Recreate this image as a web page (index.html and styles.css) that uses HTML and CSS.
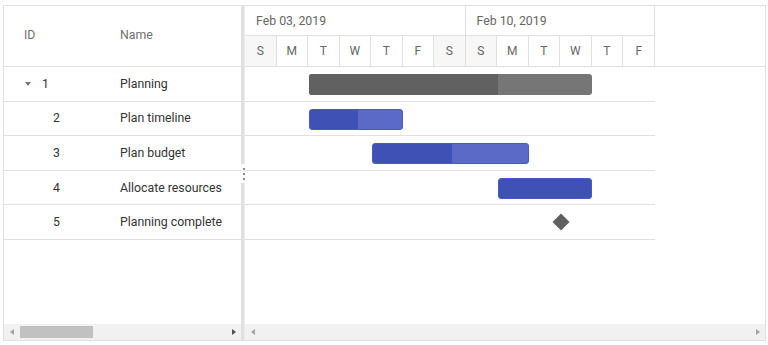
FILE: index.html
```html
<!DOCTYPE html>
<html>
<head>
<meta charset="utf-8">
<link rel="stylesheet" href="styles.css">
</head>
<body>
<div class="gantt">
  <div class="grid-pane">
    <div class="grid-header">
      <div class="hcell col-id">ID</div>
      <div class="hcell col-name">Name</div>
    </div>
    <div class="grid-body">
      <div class="row">
        <div class="cell col-id parent"><span class="expander"></span>1</div>
        <div class="cell col-name">Planning</div>
      </div>
      <div class="row">
        <div class="cell col-id child">2</div>
        <div class="cell col-name">Plan timeline</div>
      </div>
      <div class="row">
        <div class="cell col-id child">3</div>
        <div class="cell col-name">Plan budget</div>
      </div>
      <div class="row">
        <div class="cell col-id child">4</div>
        <div class="cell col-name">Allocate resources</div>
      </div>
      <div class="row">
        <div class="cell col-id child">5</div>
        <div class="cell col-name">Planning complete</div>
      </div>
    </div>
    <div class="hscroll">
      <span class="arrow left"></span>
      <div class="track"><div class="thumb"></div></div>
      <span class="arrow right dark"></span>
    </div>
  </div>
  <div class="splitter"><div class="handle"><i></i><i></i><i></i></div></div>
  <div class="chart-pane">
    <div class="chart-header">
      <div class="timeline-head">
        <div class="months">
          <div class="month">Feb 03, 2019</div>
          <div class="month">Feb 10, 2019</div>
        </div>
        <div class="days">
          <div class="day weekend">S</div>
          <div class="day">M</div>
          <div class="day">T</div>
          <div class="day">W</div>
          <div class="day">T</div>
          <div class="day">F</div>
          <div class="day weekend">S</div>
          <div class="day weekend">S</div>
          <div class="day">M</div>
          <div class="day">T</div>
          <div class="day">W</div>
          <div class="day">T</div>
          <div class="day">F</div>
        </div>
      </div>
    </div>
    <div class="chart-body">
      <div class="chart-rows">
        <div class="crow">
          <div class="bar summary" style="left:63.5px;width:283px"><div class="progress" style="width:189px"></div></div>
        </div>
        <div class="crow">
          <div class="bar task" style="left:63.5px;width:94.5px"><div class="progress" style="width:49px"></div></div>
        </div>
        <div class="crow">
          <div class="bar task" style="left:126.5px;width:157.5px"><div class="progress" style="width:80px"></div></div>
        </div>
        <div class="crow">
          <div class="bar task full" style="left:252.5px;width:94.5px"></div>
        </div>
        <div class="crow">
          <div class="milestone" style="left:309.5px"></div>
        </div>
      </div>
    </div>
    <div class="hscroll">
      <span class="arrow left"></span>
      <div class="track"></div>
      <span class="arrow right"></span>
    </div>
  </div>
</div>
</body>
</html>
```

FILE: styles.css
```css
* { box-sizing: border-box; }
html, body { margin: 0; padding: 0; background: #fff; }
body { font-family: Roboto, "Noto Sans", Arial, sans-serif; }

.gantt {
  margin: 5px 0 0 3px;
  width: 763px;
  height: 336px;
  border: 1px solid #e0e0e0;
  display: flex;
  background: #fff;
}

.grid-pane {
  width: 237px;
  display: flex;
  flex-direction: column;
}

.grid-header {
  height: 61px;
  border-bottom: 1px solid #e0e0e0;
  display: flex;
  align-items: center;
  padding-bottom: 3px;
  font-size: 12.3px;
  color: #6f6f6f;
}

.col-id { width: 104px; }
.col-name { flex: 1; padding-left: 12px; white-space: nowrap; }
.hcell.col-id { padding-left: 20px; }

.grid-body { flex: 1; }

.row {
  height: 34.6px;
  border-bottom: 1px solid #e0e0e0;
  display: flex;
  align-items: center;
  font-size: 12.3px;
  color: #333;
}

.cell.parent { padding-left: 21px; display: flex; align-items: center; }
.cell.child { padding-left: 49px; }

.expander {
  width: 0;
  height: 0;
  border-left: 3.5px solid transparent;
  border-right: 3.5px solid transparent;
  border-top: 4px solid #757575;
  margin: 1px 11px 0 0;
}

.hscroll {
  height: 16px;
  background: #f1f1f1;
  display: flex;
  align-items: center;
  flex-shrink: 0;
}
.hscroll .track { flex: 1; height: 12px; }
.thumb {
  margin-left: 1px;
  width: 73px;
  height: 12px;
  background: #c1c1c1;
}
.arrow {
  width: 0;
  height: 0;
  border-top: 3.5px solid transparent;
  border-bottom: 3.5px solid transparent;
  flex-shrink: 0;
}
.arrow.left { border-right: 4px solid #a3a3a3; margin: 0 5px 0 6px; }
.arrow.right { border-left: 4px solid #a3a3a3; margin: 0 5px 0 6px; }
.arrow.right.dark { border-left-color: #505050; }

.splitter {
  width: 4px;
  background: #e0e0e0;
  border-right: 1px solid #ececec;
  position: relative;
}
.splitter .handle {
  position: absolute;
  left: 0;
  top: 158px;
  width: 4px;
  height: 19px;
  background: #fff;
  display: flex;
  flex-direction: column;
  align-items: flex-end;
  justify-content: center;
  gap: 3px;
}
.splitter .handle i {
  display: block;
  width: 2px;
  height: 2px;
  border-radius: 1px;
  background: #5a6478;
}

.chart-pane {
  flex: 1;
  display: flex;
  flex-direction: column;
  min-width: 0;
}

.chart-header {
  height: 61px;
  border-bottom: 1px solid #e0e0e0;
  display: flex;
}
.timeline-head {
  width: 410px;
  border-right: 1px solid #e0e0e0;
}
.months {
  height: 30px;
  display: grid;
  grid-template-columns: 220.5px 1fr;
  border-bottom: 1px solid #e0e0e0;
}
.month {
  font-size: 12.3px;
  color: #666;
  padding-left: 11px;
  display: flex;
  align-items: center;
}
.month:first-child { border-right: 1px solid #e0e0e0; }
.days {
  height: 30px;
  display: grid;
  grid-template-columns: repeat(13, 31.5px);
}
.day {
  font-size: 12px;
  color: #666;
  display: flex;
  align-items: center;
  justify-content: center;
  border-right: 1px solid #e0e0e0;
}
.day:last-child { border-right: none; }
.day.weekend { background: #f7f7f7; }

.chart-body { flex: 1; }
.chart-rows { width: 410px; }
.crow {
  height: 34.6px;
  border-bottom: 1px solid #e0e0e0;
  position: relative;
}
.bar {
  position: absolute;
  top: 7px;
  height: 21px;
  border-radius: 3px;
  overflow: hidden;
}
.bar .progress { height: 100%; }
.bar.summary { background: #767676; }
.bar.summary .progress { background: #616161; }
.bar.task { background: #5a6ac6; border: 1px solid #4a5bbd; }
.bar.task .progress { background: #3f51b5; margin: -1px 0 0 -1px; height: 21px; }
.bar.full { background: #3f51b5; }
.milestone {
  position: absolute;
  top: 10.5px;
  width: 12px;
  height: 12px;
  background: #616161;
  transform: rotate(45deg);
}
```
